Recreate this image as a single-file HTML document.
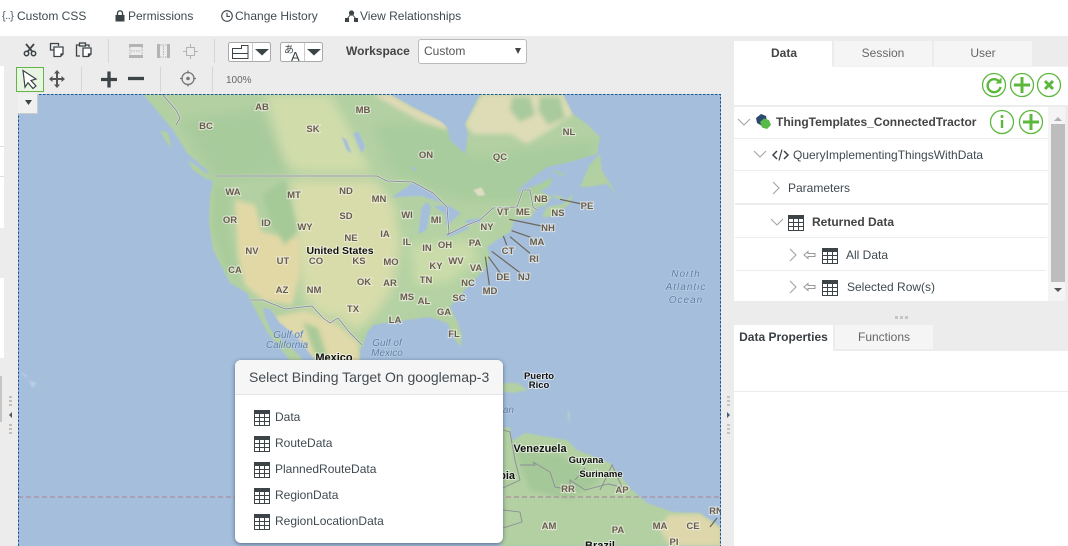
<!DOCTYPE html>
<html lang="en"><head><meta charset="utf-8"><title>Mashup Builder</title>
<style>
html,body{margin:0;padding:0}
body{width:1068px;height:546px;overflow:hidden;background:#ececec;position:relative;font:12px "Liberation Sans",sans-serif;color:#3f4a50}
.a{position:absolute}
.t{position:absolute;white-space:nowrap;line-height:14px}
.b{background:#fff}
.l{position:absolute;height:1px;background:#ececec}
svg{position:absolute;overflow:visible}
.tab{position:absolute;text-align:center;line-height:24px;color:#666;background:#f5f5f5}
.dlgrow{position:absolute;left:275px;color:#3f4a50;line-height:14px}
</style></head><body>
<svg width="0" height="0" style="position:absolute"><defs>
<g id="tb"><rect x=".5" y=".5" width="15" height="15" fill="#fff" stroke="#3c4448"/><rect x="0" y="0" width="16" height="4" fill="#3c4448"/><path d="M5.5 4v11M10.5 4v11M1 7.5h14M1 11.5h14" stroke="#3c4448" fill="none"/></g>
<g id="cd"><path d="M0 0l6 6 6-6" fill="none" stroke="#a8a39e" stroke-width="1.1"/></g>
<g id="cr"><path d="M0 0l6 6-6 6" fill="none" stroke="#a8a39e" stroke-width="1.1"/></g>
<g id="la"><path d="M0 4l4-3.500v2h7v3h-7v2z" fill="#fff" stroke="#999"/></g>
<g id="pl"><circle r="11.500" fill="#fff" stroke="#5cb83c" stroke-width="1.300"/><path d="M-8 0h16M0-8v16" stroke="#5cb83c" stroke-width="3"/></g>
<filter id="bl" x="-5%" y="-5%" width="110%" height="110%"><feGaussianBlur stdDeviation=".8"/></filter>
<filter id="bs" x="-10%" y="-10%" width="120%" height="120%"><feGaussianBlur stdDeviation="5"/></filter>
<filter id="bm" x="-10%" y="-10%" width="120%" height="120%"><feGaussianBlur stdDeviation="2"/></filter>
<clipPath id="land">
<path d="M143 94L173 130L187 153L207 170L213 183L210 196L209 223L213 250L230 283L247 293L250 300L262 322L268 333L280 348L293 364H360L360 350L363 345L367 333L373 325L390 322L407 320L430 317L447 323L457 343L461 346L462 335L458 323L450 307L462 293L477 277L487 267L490 256L487 247L497 240L510 232L514 222L512 220L531 218L535 211L537 207L545 206L552 197L540 191L550 186L552 177L540 184L520 191L515 192L533 177L547 167L573 161L597 154L600 137L587 124L573 114L563 94H480L465 124L468 134L465 154L450 140L447 127L440 121L413 107L390 94Z"/>
<path d="M580 187L590 164L600 154L602 171L617 194L607 184L587 187Z"/>
<path d="M542 217L547 207L563 204L573 194L570 204L550 217Z"/>
<path d="M552 194L567 199L556 199Z"/>
<path d="M550 169L567 175L560 175Z"/>
<path d="M188 160L213 178L208 180L193 170Z"/>
<path d="M160 130L168 133L172 148L165 140Z"/>
<path d="M500 383L517 383L528 390L513 393L500 391Z"/>
<path d="M500 428L510 427L512 441L525 433L567 440L577 450L610 463L632 490L647 503L673 512L700 513L721 527V546H500Z"/>
</clipPath>
</defs></svg>

<!-- left column -->
<div class="a b" style="left:0;top:66px;width:4px;height:162px"></div>
<div class="a" style="left:0;top:146px;width:4px;height:1px;background:#ddd"></div>
<div class="a" style="left:0;top:176px;width:4px;height:1px;background:#ddd"></div>
<div class="a b" style="left:0;top:278px;width:4px;height:80px"></div>
<div class="a" style="left:0;top:376px;width:2px;height:46px;background:#c6c6c6"></div>
<svg style="left:8px;top:395px" width="6" height="42"><path d="M1 1h3v2H1zM1 5h3v2H1zM1 9h3v2H1zM1 29h3v2H1zM1 33h3v2H1zM1 37h3v2H1z" fill="#c9bcb2"/><path d="M4 17l-3 3 3 3z" fill="#555"/></svg>

<!-- top bar -->
<div class="a b" style="left:0;top:0;width:1068px;height:36px"></div>
<div class="t" style="left:2px;top:9px;color:#4c5d6c;letter-spacing:-.5px;font-size:11px">{..}</div>
<div class="t" style="left:17px;top:9px">Custom CSS</div>
<svg style="left:115px;top:10px" width="10" height="12"><path d="M2.500 5V3.300a2.500 2.500 0 0 1 5 0V5" fill="none" stroke="#3c4448" stroke-width="1.400"/><rect x="0.500" y="5" width="9" height="6.500" fill="#3c4448"/></svg>
<div class="t" style="left:128px;top:9px">Permissions</div>
<svg style="left:221px;top:10px" width="12" height="12"><circle cx="6" cy="6" r="5.300" fill="none" stroke="#3c4448" stroke-width="1.100"/><path d="M6 2.800V6.400H9" fill="none" stroke="#3c4448" stroke-width="1.100"/></svg>
<div class="t" style="left:235px;top:9px">Change History</div>
<svg style="left:345px;top:10px" width="13" height="12"><circle cx="6.500" cy="3" r="2.600" fill="#3c4448"/><rect x="0" y="8" width="4" height="4" fill="#3c4448"/><rect x="9" y="8" width="4" height="4" fill="#3c4448"/><path d="M6 4L2 9M7 4l4 5" stroke="#3c4448"/></svg>
<div class="t" style="left:360px;top:9px">View Relationships</div>

<!-- toolbar row 1 -->
<svg style="left:0;top:36px" width="340" height="58">
<g fill="none" stroke="#3c4448" stroke-width="1.300">
<circle cx="26.500" cy="17.500" r="2.200" stroke-width="1.500"/><circle cx="33.500" cy="17.500" r="2.200" stroke-width="1.500"/><path d="M27.500 15.800L34 8M32.500 15.800L26 8" stroke-width="1.800"/>
<path d="M56 14h-5.500V7.500h8V10"/><path d="M54 11h9v7l-2.500 2.500H54z" fill="#fff"/><path d="M61 20.500V18h2.500" fill="#3c4448"/>
<path d="M80 20h-3.500V9h3M86 9h3v2"/><rect x="79.500" y="7" width="6" height="3"/><path d="M83 12h8v6l-2.500 2.500H83z" fill="#fff"/><path d="M88.500 20V18h2.500" fill="#3c4448"/>
</g>
<g stroke="#b4b4b4" fill="none">
<rect x="129" y="8" width="14" height="3" fill="#b4b4b4" stroke="none"/><rect x="129" y="19" width="14" height="3" fill="#b4b4b4" stroke="none"/><path d="M130 11v8M142 11v8M131 15h10" stroke-dasharray="1.500 1"/>
<rect x="157" y="8" width="3" height="14" fill="#b4b4b4" stroke="none"/><rect x="167" y="8" width="3" height="14" fill="#b4b4b4" stroke="none"/><path d="M160 9h7M160 21h7M163.500 10v10" stroke-dasharray="1.500 1"/>
<rect x="186.500" y="11.500" width="8" height="8"/><path d="M190.500 8v3M190.500 20v3M183 15.500h3M195 15.500h3"/>
</g>
<path d="M108.500 3v24M214.500 3v24" stroke="#d6d6d6"/>
<rect x="228.500" y="6.500" width="42" height="19" rx="2" fill="#fff" stroke="#aaa"/><path d="M252.500 7v18" stroke="#ccc"/>
<path d="M232.500 12.500h9v-3h6.500v13h-15.500z" fill="none" stroke="#3c4448"/><path d="M232.500 17.500h15.500" stroke="#3c4448"/>
<path d="M255 13h14l-7 6.500z" fill="#3c4448"/>
<rect x="280.500" y="6.500" width="42" height="19" rx="2" fill="#fff" stroke="#aaa"/><path d="M304.500 7v18" stroke="#ccc"/>
<path d="M307 13h14l-7 6.500z" fill="#3c4448"/>
<text x="284" y="17" font-size="10" fill="#3c4448" font-family="'Liberation Sans','Noto Sans CJK JP',sans-serif">あ</text>
<text x="291" y="25" font-size="13" fill="#3c4448" font-family="'Liberation Sans',sans-serif">A</text>
</svg>
<div class="t" style="left:346px;top:44px;font-weight:bold;color:#444">Workspace</div>
<div class="a b" style="left:418px;top:39px;width:107px;height:23px;border:1px solid #bbb;border-radius:3px"></div>
<div class="t" style="left:424px;top:44px;color:#555">Custom</div>
<svg style="left:514px;top:48px" width="8" height="6"><path d="M1 0h6L4 6z" fill="#444"/></svg>

<!-- toolbar row 2 -->
<div class="a" style="left:16px;top:67px;width:26px;height:23px;border:1px solid #66b34a;background:#e8f5e2"></div>
<svg style="left:0;top:66px" width="260" height="28">
<path d="M23 4.500L36 13l-5 1.500 5 5.500-3 2.500-5-5.800-3 4.500z" fill="#fff" stroke="#3c4448" stroke-width="1.200"/>
<path d="M57 6v14M50 13h14" stroke="#555" stroke-width="2"/><path d="M57 4l-3 3.500h6zM57 22l-3-3.500h6zM49 13l3.500-3v6zM65 13l-3.500-3v6z" fill="#555"/>
<path d="M109 5.500v16M101 13.500h16" stroke="#3c4448" stroke-width="3.300"/>
<path d="M128 12.500h16" stroke="#3c4448" stroke-width="3.300"/>
<circle cx="188" cy="12.500" r="6" fill="none" stroke="#777" stroke-width="1.300"/><circle cx="188" cy="12.500" r="1.800" fill="#777"/><path d="M188 4.500v3M188 17.500v3M180 12.500h3M193 12.500h3" stroke="#777" stroke-width="1.300"/>
<path d="M81.500 1v25M160.500 1v25M212.500 1v25" stroke="#d6d6d6"/>
</svg>
<div class="t" style="left:226px;top:74px;font-size:10px;color:#666">100%</div>

<!-- MAP -->
<svg style="left:18px;top:94px;overflow:hidden" width="703" height="452" viewBox="18 94 703 452" font-family="'Liberation Sans',sans-serif">
<rect x="18" y="94" width="703" height="452" fill="#a4bedc"/>
<g filter="url(#bl)"><g clip-path="url(#land)">
<rect x="18" y="94" width="703" height="452" fill="#b2d0a2"/>
<g filter="url(#bs)">
<path fill="#d0dcaa" d="M265 94H330L350 130L372 172H300L285 165L275 130Z"/>
<path fill="#a8cb9c" d="M180 120L260 110L290 172L215 180Z"/>
<path fill="#d7dcaa" d="M290 180H375L395 205L400 245L392 290L372 318L355 332L340 318L323 316L305 300L295 250Z"/>
<path fill="#b4d2a3" d="M402 225L495 215L490 250L470 282L445 305L395 322L375 322L395 290Z"/>
<path fill="#c9dba8" d="M410 245L470 240L478 258L450 282L415 285Z"/>
<path fill="#a8cc9d" d="M375 125L450 125L470 158L595 140L590 165L525 200L470 200L440 192L392 170Z"/>
</g>
<g filter="url(#bm)">
<path fill="#e2d8a6" d="M235 200L255 205L262 232L300 240L300 275L292 305L263 300L245 285L238 255Z"/>
<path fill="#a6c998" d="M262 195L285 180L298 230L285 245L272 225Z"/>
<path fill="#aacc9b" d="M213 185L232 185L228 225L238 275L226 272L212 230Z"/>
<path fill="#e0d9a9" d="M272 318L305 310L338 325L358 342L360 364H318L296 340Z"/>
<path fill="#a8ca98" d="M303 322L318 328L330 364L315 355Z"/>
<path fill="#dedcb6" d="M465 124L482 94H563L573 114L553 128L527 144L510 134L473 134Z"/>
<path fill="#a9ca9e" d="M512 97L530 97L535 115L520 122L510 110Z"/>
<path fill="#a9ca9e" d="M540 97L560 97L565 118L548 125L538 110Z"/>
<path fill="#e0dab6" d="M372 94H390L413 108L447 122L447 130L423 122L400 110Z"/>
<path fill="#dfd7ac" d="M668 515L700 514L721 528V546H670L660 530Z"/>
<path fill="#a5c898" d="M515 450L560 455L600 480L570 500L530 490Z"/>
</g>
<path fill="#a4bedc" d="M263 308L270 309L280 323L297 337L318 364H306L297 353L283 340L272 332L266 320Z"/>
</g>
<!-- lakes -->
<g transform="translate(290,90) scale(.33333)" fill="#a4bedc">
<path d="M305 322L370 278L432 312L452 338L395 318L345 320Z"/>
<path d="M385 432L395 352L412 335L422 350L410 420Z"/>
<path d="M430 348L472 345L512 368L480 400L470 408L464 372Z"/>
<path d="M464 436L530 405L536 416L482 440Z"/>
<path d="M528 390L576 384L570 398L530 402Z"/>
<path d="M190 130L205 125L225 170L215 190Z"/>
<path d="M155 140L170 150L185 190L170 180Z"/>
<path d="M365 230L380 235L375 245Z"/>
<path fill="#e0ddc4" d="M550 300L575 292L585 315L565 318Z"/>
</g>
<!-- Hawaii and small islands -->
<path fill="#bccde2" d="M29 380L37 383L32 388Z"/>
<path fill="#bccde2" d="M20 372L28 376L25 377Z"/>
<path fill="#b6cae0" d="M21 485L23 486L22 488Z"/>
<path fill="#b4cad0" d="M567 410L570 412L570 424L568 420Z"/>
</g>
<!-- borders -->
<g fill="none" stroke="#fff" stroke-width="2.200" opacity=".5"><path d="M216 176H377L387 181L413 182L433 193L447 207L449 233L447 235L467 225L480 220L493 208L517 207L523 190L530 190L533 207L537 210"/><path d="M250 300L263 300L285 309L302 307L312 306L323 318L330 323L338 318L350 333L362 345"/><path d="M162 94L176 110L180 118L176 125"/></g>
<g fill="none" stroke="#8b8d98"><path d="M216 176H377L387 181L413 182L433 193L447 207L449 233L447 235L467 225L480 220L493 208L517 207L523 190L530 190L533 207L537 210"/><path d="M250 300L263 300L285 309L302 307L312 306L323 318L330 323L338 318L350 333L362 345"/><path d="M162 94L176 110L180 118L176 125"/>
<path d="M503 430L510 432L515 460L520 480L503 488M503 510L520 512L522 522L503 528M520 465L535 465L533 462L550 472L555 487L570 490L570 480L585 490L608 484L622 487L612 465L606 478L600 490M585 468L575 480" stroke-width=".9"/></g>
<!-- callouts -->
<g transform="translate(290,90) scale(.33333)" fill="none" stroke="#6d6658" stroke-width="3.500"><path d="M810 328L875 342M658 388L755 408M665 422L722 442M660 440L720 490M640 438L650 465M605 484L690 548M595 500L630 548M586 500L598 585"/></g>
<path d="M717 518L710 527" stroke="#6d6658" stroke-width="1.200"/>
<!-- equator -->
<path d="M18 497H721" stroke="#b08aa0" stroke-width="1.200" stroke-dasharray="5 3"/>
<!-- state labels -->
<g font-size="9.500" font-weight="bold" fill="#665d4e" stroke="#f2f0e6" stroke-opacity=".65" stroke-width="2.200" paint-order="stroke" text-anchor="middle">
<text x="262" y="110">AB</text><text x="206" y="129">BC</text><text x="233" y="195">WA</text><text x="294" y="198">MT</text><text x="230" y="223">OR</text><text x="266" y="226">ID</text><text x="252" y="254">NV</text><text x="283" y="264">UT</text><text x="235" y="273">CA</text><text x="282" y="293">AZ</text>
<text x="363" y="113">MB</text><text x="313" y="132">SK</text><text x="426" y="158">ON</text><text x="500" y="160">QC</text><text x="569" y="135">NL</text><text x="346" y="194">ND</text><text x="379" y="202">MN</text><text x="541" y="202">NB</text><text x="587" y="209">PE</text><text x="558" y="216">NS</text><text x="503" y="215">VT</text><text x="523" y="215">ME</text><text x="548" y="231">NH</text><text x="487" y="230">NY</text><text x="407" y="218">WI</text><text x="436" y="223">MI</text><text x="346" y="219">SD</text><text x="305" y="230">WY</text><text x="351" y="241">NE</text><text x="385" y="237">IA</text><text x="407" y="245">IL</text><text x="427" y="251">IN</text><text x="445" y="248">OH</text><text x="475" y="246">PA</text><text x="537" y="245">MA</text><text x="508" y="254">CT</text><text x="534" y="262">RI</text><text x="316" y="264">CO</text><text x="359" y="264">KS</text><text x="391" y="265">MO</text><text x="436" y="269">KY</text><text x="456" y="264">WV</text><text x="476" y="271">VA</text><text x="503" y="280">DE</text><text x="524" y="280">NJ</text><text x="426" y="283">TN</text><text x="364" y="285">OK</text><text x="390" y="286">AR</text><text x="468" y="286">NC</text><text x="314" y="293">NM</text><text x="490" y="294">MD</text><text x="407" y="300">MS</text><text x="424" y="304">AL</text><text x="459" y="301">SC</text><text x="444" y="315">GA</text><text x="353" y="312">TX</text><text x="395" y="323">LA</text><text x="454" y="337">FL</text>
<text x="568" y="492">RR</text><text x="622" y="493">AP</text><text x="549" y="529">AM</text><text x="618" y="533">PA</text><text x="660" y="529">MA</text><text x="693" y="529">CE</text><text x="716" y="514">RN</text><text x="674" y="545">PI</text>
</g>
<!-- country labels -->
<g font-size="10.500" font-weight="bold" fill="#111" stroke="#fff" stroke-opacity=".55" stroke-width="2" paint-order="stroke" text-anchor="middle">
<text x="340" y="254">United States</text><text x="334" y="361" font-size="11">Mexico</text><text x="539" y="379" font-size="9.500">Puerto</text><text x="539" y="388" font-size="9.500">Rico</text><text x="540" y="452" font-size="11">Venezuela</text><text x="586" y="463" font-size="9.500">Guyana</text><text x="601" y="477" font-size="9.500">Suriname</text><text x="490" y="479" font-size="11">Colombia</text><text x="600" y="549" font-size="11">Brazil</text>
</g>
<!-- water labels -->
<g font-size="10" font-style="italic" fill="#5e7ea8" stroke="#c9d8ea" stroke-opacity=".55" stroke-width="1.500" paint-order="stroke" text-anchor="middle">
<text x="288" y="338">Gulf of</text><text x="287" y="348">California</text><text x="387" y="346">Gulf of</text><text x="387" y="356">Mexico</text><text x="686" y="277" letter-spacing="1">North</text><text x="686" y="290" letter-spacing="1">Atlantic</text><text x="686" y="303" letter-spacing="1">Ocean</text><text x="514" y="413" text-anchor="end">Caribbean</text>
</g>
<!-- dashed border -->
<path d="M18.500 546V94.500H720.500V546" fill="none" stroke="#1d5a92" stroke-dasharray="2.500 1.500"/>
</svg>
<div class="a" style="left:18px;top:94px;width:19px;height:19px;background:#f0f0f0;border-right:1px solid #ccc;border-bottom:1px solid #ccc"></div>
<svg style="left:24px;top:100px" width="10" height="6"><path d="M1 0h7L4.500 5z" fill="#3c4448"/></svg>

<!-- splitter right of map -->
<svg style="left:726px;top:395px" width="6" height="42"><path d="M1 1h3v2H1zM1 5h3v2H1zM1 9h3v2H1zM1 29h3v2H1zM1 33h3v2H1zM1 37h3v2H1z" fill="#c4c4c4"/><path d="M1 17l3 3-3 3z" fill="#4b5a78"/></svg>

<!-- Dialog -->
<div class="a" style="left:235px;top:360px;width:268px;height:183px;background:#fff;border-radius:6px;box-shadow:0 1px 4px rgba(40,50,70,.6);overflow:hidden">
<div style="height:34px;background:#f6f6f6;border-bottom:1px solid #e4e4e4"></div></div>
<div class="t" style="left:249px;top:369px;font-size:14px;line-height:16px;color:#444c52">Select Binding Target On googlemap-3</div>
<svg style="left:254px;top:410px" width="16" height="16"><use href="#tb"/></svg><div class="dlgrow" style="top:410px">Data</div>
<svg style="left:254px;top:436px" width="16" height="16"><use href="#tb"/></svg><div class="dlgrow" style="top:436px">RouteData</div>
<svg style="left:254px;top:462px" width="16" height="16"><use href="#tb"/></svg><div class="dlgrow" style="top:462px">PlannedRouteData</div>
<svg style="left:254px;top:488px" width="16" height="16"><use href="#tb"/></svg><div class="dlgrow" style="top:488px">RegionData</div>
<svg style="left:254px;top:514px" width="16" height="16"><use href="#tb"/></svg><div class="dlgrow" style="top:514px">RegionLocationData</div>

<!-- Right panel top -->
<div class="a b" style="left:734px;top:41px;width:98px;height:27px"></div>
<div class="tab" style="left:834px;top:41px;width:98px;height:25px">Session</div>
<div class="tab" style="left:934px;top:41px;width:98px;height:25px">User</div>
<div class="t" style="left:735px;top:46px;width:98px;text-align:center;font-weight:bold;color:#444">Data</div>
<div class="a b" style="left:734px;top:67px;width:334px;height:38px"></div>
<div class="a" style="left:832px;top:66px;width:236px;height:1px;background:#f1f1f1"></div>
<svg style="left:980px;top:70px" width="85" height="30">
<g transform="translate(14,15)"><circle r="11.500" fill="#fff" stroke="#5cb83c" stroke-width="1.300"/><path d="M5.500-3A6.500 6.500 0 1 0 6.500 2" fill="none" stroke="#5cb83c" stroke-width="2.400"/><path d="M7.500-7.500V-1.500H1.500z" fill="#5cb83c"/></g>
<g transform="translate(42,15)"><use href="#pl"/></g>
<g transform="translate(69,15)"><circle r="11.500" fill="#fff" stroke="#5cb83c" stroke-width="1.300"/><path d="M-4-4L4 4M4-4L-4 4" stroke="#5cb83c" stroke-width="3"/></g>
</svg>
<!-- tree -->
<div class="a b" style="left:734px;top:107px;width:314px;height:194px"></div>
<div class="a" style="left:1048px;top:107px;width:17px;height:194px;background:#f4f4f4"></div>
<div class="a" style="left:1051px;top:124px;width:14px;height:158px;background:#bdbdbd"></div>
<svg style="left:1050px;top:112px" width="16" height="185"><path d="M4 9l4-4 4 4z" fill="#b0b0b0"/><path d="M4 176h8l-4 4z" fill="#555"/></svg>
<div class="l" style="left:734px;top:138px;width:314px"></div>
<div class="l" style="left:734px;top:170px;width:314px"></div>
<div class="l" style="left:735px;top:203px;width:313px;height:2px"></div>
<div class="l" style="left:735px;top:237px;width:312px"></div>
<div class="l" style="left:736px;top:270px;width:310px"></div>

<svg style="left:738px;top:119px" width="13" height="8"><use href="#cd"/></svg>
<svg style="left:755px;top:113px" width="17" height="17"><path d="M1 5l5-4 5 2 1 6-5 4-5-3z" fill="#2c4a70"/><path d="M5 9l4-3.500 5 1.500 2 5-4 4-5-1.500z" fill="#57b947"/></svg>
<div class="t" style="left:776px;top:115px;font-weight:bold;color:#444">ThingTemplates_ConnectedTractor</div>
<svg style="left:990px;top:110px" width="54" height="25"><g transform="translate(12,12)"><circle r="11.500" fill="#fff" stroke="#5cb83c" stroke-width="1.300"/><path d="M0-2V6" stroke="#5cb83c" stroke-width="2.400"/><circle cy="-5.500" r="1.500" fill="#5cb83c"/></g><g transform="translate(41,12)"><use href="#pl"/></g></svg>

<svg style="left:754px;top:151px" width="13" height="8"><use href="#cd"/></svg>
<svg style="left:772px;top:149px" width="17" height="12"><path d="M5 2L1 6l4 4M12 2l4 4-4 4" fill="none" stroke="#3c4448" stroke-width="1.500"/><path d="M10 0.500L7 11.500" stroke="#3c4448" stroke-width="1.200"/></svg>
<div class="t" style="left:793px;top:148px">QueryImplementingThingsWithData</div>

<svg style="left:773px;top:182px" width="8" height="13"><use href="#cr"/></svg>
<div class="t" style="left:788px;top:181px">Parameters</div>

<svg style="left:771px;top:219px" width="13" height="8"><use href="#cd"/></svg>
<svg style="left:788px;top:215px" width="16" height="16"><use href="#tb"/></svg>
<div class="t" style="left:812px;top:215px;font-weight:bold;color:#444">Returned Data</div>

<svg style="left:790px;top:249px" width="8" height="13"><use href="#cr"/></svg>
<svg style="left:804px;top:251px" width="12" height="9"><use href="#la"/></svg>
<svg style="left:822px;top:248px" width="16" height="16"><use href="#tb"/></svg>
<div class="t" style="left:846px;top:248px">All Data</div>

<svg style="left:790px;top:281px" width="8" height="13"><use href="#cr"/></svg>
<svg style="left:804px;top:283px" width="12" height="9"><use href="#la"/></svg>
<svg style="left:822px;top:280px" width="16" height="16"><use href="#tb"/></svg>
<div class="t" style="left:847px;top:280px">Selected Row(s)</div>

<!-- Right panel lower -->
<svg style="left:895px;top:316px" width="14" height="4"><path d="M0 0h3v3H0zM5 0h3v3H5zM10 0h3v3h-3z" fill="#c4c4c4"/></svg>
<div class="a b" style="left:734px;top:325px;width:99px;height:27px"></div>
<div class="tab" style="left:835px;top:325px;width:98px;height:24px">Functions</div>
<div class="t" style="left:734px;top:330px;width:99px;text-align:center;font-weight:bold;color:#3a3f44">Data Properties</div>
<div class="a b" style="left:734px;top:351px;width:334px;height:195px"></div>
<div class="l" style="left:734px;top:391px;width:334px"></div>
</body></html>
